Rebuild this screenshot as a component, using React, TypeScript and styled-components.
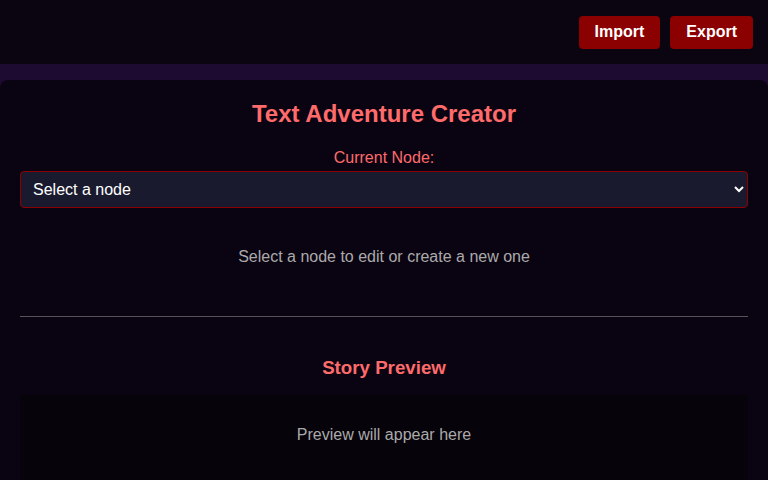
import * as React from "react";
import styled, { createGlobalStyle } from "styled-components";

const GlobalStyle = createGlobalStyle`
  html, body {
    margin: 0;
    padding: 0;
    background: #1e0b32;
    font-family: "Liberation Sans", Arial, sans-serif;
  }
`;

const Page = styled.div`
  min-height: 480px;
  display: flex;
  flex-direction: column;
`;

const Toolbar = styled.header`
  height: 64px;
  background: #0a0510;
  display: flex;
  justify-content: flex-end;
  align-items: center;
  gap: 10px;
  padding: 0 15px;
  box-sizing: border-box;
`;

const Button = styled.button`
  background: #8b0000;
  color: #fff;
  border: none;
  border-radius: 4px;
  font-family: inherit;
  font-size: 16px;
  font-weight: bold;
  height: 33px;
  padding: 0 16px;
  cursor: pointer;
`;

const Card = styled.main`
  margin-top: 16px;
  background: #0a0412;
  border-radius: 8px 8px 0 0;
  padding: 20px 20px 0;
  display: flex;
  flex-direction: column;
  flex: 1;
`;

const Title = styled.h1`
  margin: 0;
  text-align: center;
  color: #ff6b6b;
  font-size: 24px;
  line-height: 28px;
`;

const Label = styled.label`
  margin-top: 21px;
  text-align: center;
  color: #ff6b6b;
  font-size: 16px;
  line-height: 18px;
`;

const Select = styled.select`
  margin-top: 4px;
  height: 37px;
  background: #1a1a2e;
  color: #fff;
  border: 1px solid #8b0000;
  border-radius: 4px;
  padding: 0 8px;
  font-family: inherit;
  font-size: 16px;
  color-scheme: dark;
`;

const EmptyText = styled.p`
  margin: 0;
  padding: 40px 0;
  text-align: center;
  color: #aaa;
  font-size: 16px;
  line-height: 18px;
`;

const Divider = styled.hr`
  margin: 10px 0 0;
  border: none;
  border-top: 1px solid #555;
`;

const SectionTitle = styled.h3`
  margin: 40px 0 0;
  text-align: center;
  color: #ff6b6b;
  font-size: 18.72px;
  line-height: 22px;
`;

const PreviewBox = styled.div`
  margin-top: 16px;
  background: #06030a;
  padding: 31px 0;
  text-align: center;
  color: #aaa;
  font-size: 16px;
  flex: 1;
`;

export default function App() {
  return (
    <Page>
      <GlobalStyle />
      <Toolbar>
        <Button>Import</Button>
        <Button>Export</Button>
      </Toolbar>
      <Card>
        <Title>Text Adventure Creator</Title>
        <Label>Current Node:</Label>
        <Select defaultValue="">
          <option value="">Select a node</option>
        </Select>
        <EmptyText>Select a node to edit or create a new one</EmptyText>
        <Divider />
        <SectionTitle>Story Preview</SectionTitle>
        <PreviewBox>Preview will appear here</PreviewBox>
      </Card>
    </Page>
  );
}
